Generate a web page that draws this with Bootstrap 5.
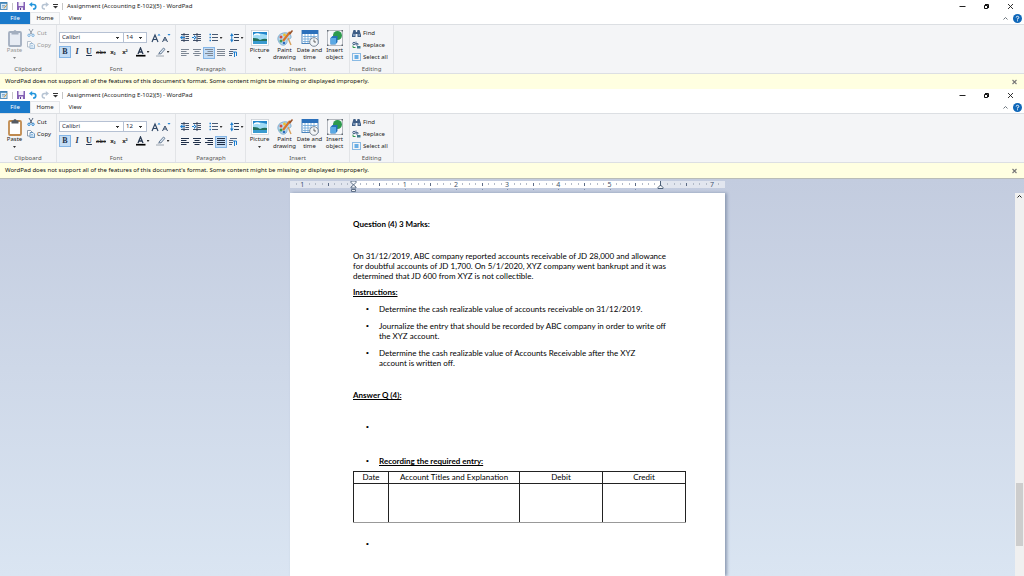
<!DOCTYPE html>
<html lang="en">
<head>
<meta charset="utf-8">
<meta name="viewport" content="width=device-width, initial-scale=1">
<title>Assignment (Accounting E-102)(5) - WordPad</title>
<link href="https://cdn.jsdelivr.net/npm/bootstrap@5.3.0/dist/css/bootstrap.min.css" rel="stylesheet">
<script src="https://cdn.jsdelivr.net/npm/bootstrap@5.3.0/dist/js/bootstrap.bundle.min.js"></script>
<style>
  body { font: 6px/7px "Noto Sans", "Open Sans", sans-serif; color: #1c1c1c; background: #fff; }
  button, select, a { font: inherit; color: inherit; text-decoration: none; }
  button { background: none; border: 0; padding: 0; }
  svg { display: block; flex: none; }
  .i8 { width: 8px; height: 8px; } .i10 { width: 10px; height: 10px; } .i18 { width: 18px; height: 18px; }
  .titlebar { height: 12px; padding-right: 2px; }
  .titlebar .vr { height: 7px; min-height: 0; align-self: center; }
  .winctl { width: 24px; }
  .tabs { height: 12px; padding-right: 2px; }
  .tabs a { display: block; height: 12px; line-height: 12px; width: 30px; text-align: center; }
  .tabs .file-tab { background: #1979ca; color: #fff; }
  .tabs .home-tab { background: #f9fafb; border: solid #e4e6e9; border-width: 1px 1px 0; line-height: 11px; }
  .ribbon { height: 50px; background: #f4f5f7; border: solid #dcdfe3; border-width: 1px 0; }
  .group { border-right: 1px solid #e2e4e7; padding: 4px 2px 0; color: #222; }
  .group-name { color: #555; text-align: center; margin: auto -2px 0; line-height: 8px; }
  .g-clip { width: 57px; } .g-font { width: 119px; } .g-para { width: 70px; padding-left: 3px; } .g-ins { width: 104px; padding: 4px 1px 0; } .g-edit { width: 44px; }
  .tool-row { margin: 3px 0; }
  .tool { height: 12px; width: 12px; flex: none; display: flex; align-items: center; justify-content: center; border: 1px solid transparent; color: inherit; }
  .tool.wide { width: 17px; gap: 1px; }
  .g-font .tool.wide { margin-left: 3px; }
  .tool.active { background: #c3dcf5; border-color: #84b5e6; }
  .letter { font: bold 8px/8px "Liberation Serif", serif; color: #22334d; }
  .picker { appearance: none; flex: none; height: 11px; line-height: 9px; padding: 0 2px; border: 1px solid #b6c1d3; border-radius: 0; color: #1e2a3a;
    background: linear-gradient(#333, #333) right 4px top 4px / 3px 1px no-repeat, linear-gradient(#333, #333) right 5px top 5px / 1px 1px no-repeat #fff; }
  .p-face { width: 65px; } .p-size { width: 24px; margin-left: -1px; }
  .caret { width: 3px; height: 2px; background: #333; clip-path: polygon(0 0, 100% 0, 50% 100%); }
  .big { width: 25px; text-align: center; display: flex; flex-direction: column; align-items: center; white-space: nowrap; }
  .big .caret { margin-top: 3px; }
  .with-icon { display: flex; align-items: center; gap: 2px; white-space: nowrap; }
  .off { color: #969696; } .off svg, .off .caret { opacity: .6; }
  .notice { height: 15px; background: #ffffe1; color: #111; padding: 0 6px 0 5px; }
  .notice button { color: #777; }
  .desk { background: linear-gradient(#c3ccdf, #dae5f2); border-top: 1px solid #b9bcb8; }
  .ruler-row { height: 14px; padding: 2px 9px 0 0; }
  .ruler text { font-size: 7px; fill: #44546e; text-anchor: middle; }
  .sheet { width: 435px; font: 8px/10px Lato, "Liberation Sans", sans-serif; color: #000; padding: 26px 39px 26px 63px; background: #fff; box-shadow: 2px 0 3px #8d9bb3; }
  .sheet p { margin: 0; padding-right: 15px; }
  .sheet ul { margin: 0; padding: 0 15px 0 26px; list-style: none; }
  .sheet li { min-height: 10px; margin-bottom: 7px; }
  .sheet li::before { content: "•"; float: left; margin-left: -13px; font-family: "Liberation Sans", sans-serif; }
  .sheet u { text-underline-offset: 1px; text-decoration-thickness: 1px; font-weight: 700; }
  .sheet .question { margin-bottom: 22px; }
  .sheet .lead-in { margin: 6px 0 7px; }
  .sheet .answer { margin: 22px 0; }
  .sheet .answers li { margin-bottom: 24px; }
  .sheet .answers li:last-child { margin-bottom: 5px; }
  .sheet .trailing li { margin: 16px 0 0; }
  .entry { width: 333px; border-collapse: collapse; table-layout: fixed; }
  .entry th, .entry td { border: 1px solid #222; text-align: center; font-weight: 400; padding: 0; line-height: 11px; }
  .entry td { height: 39px; border-bottom-color: #999; }
  .c-date { width: 35px; } .c-title { width: 131px; }
  .track { width: 9px; background: #f0f0f0; }
  .track .above { flex: 283 1 0; } .track .below { flex: 30 1 0; }
  .thumb { background: #cdcdcd; flex: 63 1 0; margin: 0 1px; }
</style>
</head>
<body class="d-flex flex-column min-vh-100">

<svg width="0" height="0" class="position-absolute" aria-hidden="true">
  <symbol id="app" viewBox="0 0 8 8"><rect x=".5" y=".5" width="6.500" height="7" fill="#dcecf8" stroke="#5d93bd"/><path d="M.5 1h6.500" stroke="#347bb0" stroke-width="1.500"/><path d="M2 3.500h3M2 5h3" stroke="#5d93bd" stroke-width=".7"/><path d="M4 6.500l3-4" stroke="#d29c45"/></symbol>
  <symbol id="save" viewBox="0 0 8 8"><path d="M0 0h8v8H0z" fill="#8461b5"/><path d="M1.500 0h5v4h-5z" fill="#f4effa"/><path d="M2 5.500h4V8H2z" fill="#efe8f7"/><path d="M3 6h1v2H3z" fill="#5c3b8c"/></symbol>
  <symbol id="undo" viewBox="0 0 8 8"><path d="M2 2.500h2.500a2 2 0 0 1 0 4.500H4" fill="none" stroke="currentColor" stroke-width="1.700"/><path d="M0 2.500L3.200 0v5z" fill="currentColor"/></symbol>
  <symbol id="redo" viewBox="0 0 8 8"><path d="M6 2.500H3.500a2 2 0 0 0 0 4.500H4" fill="none" stroke="currentColor" stroke-width="1.500"/><path d="M8 2.500L4.800 0v5z" fill="currentColor"/></symbol>
  <symbol id="menu" viewBox="0 0 5 6"><path d="M0 1.500h5" stroke="#333"/><path d="M0 3h5L2.500 5.500z" fill="#333"/></symbol>
  <symbol id="min" viewBox="0 0 7 7"><path d="M.5 3.500h6" stroke="#222"/></symbol>
  <symbol id="max" viewBox="0 0 7 7"><path d="M1.500 2.500h3v3h-3zM2 1.500h3.500V5" fill="none" stroke="#111"/></symbol>
  <symbol id="x" viewBox="0 0 7 7"><path d="M1 1l5 5M6 1L1 6" stroke="currentColor" stroke-width=".9"/></symbol>
  <symbol id="xs" viewBox="0 0 7 7"><path d="M1.500 2l4 4M5.500 2l-4 4" stroke="currentColor" stroke-width="1.100"/></symbol>
  <symbol id="up" viewBox="0 0 7 7"><path d="M1.500 4.500l2-2 2 2" fill="none" stroke="currentColor"/></symbol>
  <symbol id="paste" viewBox="0 0 14 18"><rect x="1" y="3" width="12" height="14" rx="1" fill="#fff" stroke="#c08a4e" stroke-width="1.800"/><path d="M3.500 2.500h2a1.500 1.500 0 0 1 3 0h2v3h-7z" fill="#555b63"/></symbol>
  <symbol id="pasteoff" viewBox="0 0 14 18"><rect x="1" y="3" width="12" height="14" rx="1" fill="#dfe7f3" stroke="#6d7f9b" stroke-width="1.800"/><path d="M3.500 2.500h2a1.500 1.500 0 0 1 3 0h2v3h-7z" fill="#6d7f9b"/></symbol>
  <symbol id="cut" viewBox="0 0 8 8"><path d="M2 0l3.200 5.500M6 0L2.800 5.500" stroke="#526277"/><circle cx="2" cy="6.300" r="1.200" fill="none" stroke="#2c86cf"/><circle cx="6" cy="6.300" r="1.200" fill="none" stroke="#2c86cf"/></symbol>
  <symbol id="copy" viewBox="0 0 8 8"><path d="M.5.5h3l1.500 1.500v4H.5z" fill="#fff" stroke="#73859b" stroke-width=".8"/><path d="M3 2.500h3L7.500 4v3.500H3z" fill="#e8f2fb" stroke="#4e83b5" stroke-width=".8"/><path d="M4 4.500h2M4 6h2.500" stroke="#4e93d0" stroke-width=".6"/></symbol>
  <symbol id="grow" viewBox="0 0 10 10"><path d="M1 9L4 2l3 7M2 6.500h4" fill="none" stroke="#2f4766" stroke-width="1.200"/><path d="M6.500 2.500L8 .7l1.500 1.800z" fill="#1e7fd0"/></symbol>
  <symbol id="shrink" viewBox="0 0 10 10"><path d="M1.500 9L4 4l2.500 5M2.500 7h3" fill="none" stroke="#2f4766"/><path d="M6.500 1L8 2.800 9.500 1z" fill="#1e7fd0"/></symbol>
  <symbol id="fcolor" viewBox="0 0 10 10"><path d="M2 7L4.500 1 7 7M3 5h3" fill="none" stroke="#2a3a52" stroke-width="1.300"/><path d="M0 8.700h9.500" stroke="#000" stroke-width="1.700"/></symbol>
  <symbol id="pen" viewBox="0 0 10 10"><path d="M3 6L7.500 1l1.500 1.300L4.800 7z" fill="#dfe9f3" stroke="#47617f" stroke-width=".8"/><path d="M3 6l-1.500 1.500 3-.3" fill="#6a7e96"/><path d="M0 9h8" stroke="#b2b8c2" stroke-width="1.300"/></symbol>
  <symbol id="outdent" viewBox="0 0 10 10"><path d="M1 1.500h8M5.500 3.500H9M5.500 5.500H9M1 7.500h8M4 0v9" stroke="#2c3d57" stroke-width=".9"/><path d="M0 4.500L2.500 2v5zM2 4h3v1H2z" fill="#1e7fd0"/></symbol>
  <symbol id="indent" viewBox="0 0 10 10"><path d="M1 1.500h8M5.500 3.500H9M5.500 5.500H9M1 7.500h8M5 0v9" stroke="#2c3d57" stroke-width=".9"/><path d="M4.500 4.500L2 2v5zM0 4h3v1H0z" fill="#1e7fd0"/></symbol>
  <symbol id="list" viewBox="0 0 10 10"><path d="M3 1.500h6M3 4.500h6M3 7.500h6" stroke="#4a5a72"/><path d="M.5 1.500H2M.5 4.500H2M.5 7.500H2" stroke="#1e7fd0" stroke-width="1.500"/></symbol>
  <symbol id="spacing" viewBox="0 0 10 10"><path d="M4 1.500h5M4 4.500h5M4 7.500h5" stroke="#34455e"/><path d="M1.800 0L0 3h3.600zM1.800 9.500L0 6.500h3.600zM1.300 3h1v4h-1z" fill="#1e7fd0"/></symbol>
  <symbol id="al" viewBox="0 0 10 10"><path d="M1 1.500h8M1 3.500h5.500M1 5.500h8M1 7.500h5.500" stroke="currentColor"/></symbol>
  <symbol id="ac" viewBox="0 0 10 10"><path d="M1 1.500h8M2.500 3.500h5M1 5.500h8M2.500 7.500h5" stroke="currentColor"/></symbol>
  <symbol id="ar" viewBox="0 0 10 10"><path d="M1 1.500h8M3.500 3.500H9M1 5.500h8M3.500 7.500H9" stroke="currentColor"/></symbol>
  <symbol id="aj" viewBox="0 0 10 10"><path d="M1 1.500h8M1 3.500h8M1 5.500h8M1 7.500h8" stroke="currentColor"/></symbol>
  <symbol id="para" viewBox="0 0 10 10"><path d="M2 1.500h7M1 3.500h4M1 5.500h4M1 7.500h3" stroke="#53657f"/><path d="M5 4h3.500v4M6.500 4v5" stroke="#1e7fd0" fill="none"/></symbol>
  <symbol id="picture" viewBox="0 0 18 18"><rect x=".5" y="1.500" width="17" height="15" fill="#fff" stroke="#c3c9d0" stroke-width=".7"/><path d="M2 3h14v12H2z" fill="#2387cc"/><path d="M2 6q6-3 14 0v5H2z" fill="#9fdbf5"/><path d="M3 6q3-2 6 0" stroke="#fff" stroke-width="1.500" fill="none"/><path d="M2 9q5 0 7 2 4-2 7-1v2H2z" fill="#23705c"/><path d="M2 12h14v3H2z" fill="#3a9bd0"/></symbol>
  <symbol id="paint" viewBox="0 0 18 18"><path d="M2 11C1 6 6 3 11 4c5 1 5 6 2 6-3 0-1 3-3 5-3 3-7 0-8-4z" fill="#b9d9ee" stroke="#699fc7" stroke-width=".8"/><circle cx="5" cy="8" r="1.500" fill="#d54c3b"/><circle cx="8.500" cy="6" r="1.400" fill="#eec02e"/><circle cx="5" cy="12" r="1.500" fill="#3b9b51"/><circle cx="8" cy="14" r="1.300" fill="#2b6bc0"/><path d="M7 12l7-9" stroke="#d87528" stroke-width="2.200"/><path d="M13 4l3-3 1 1-3 4z" fill="#9b5328"/><path d="M12 9l3 7" stroke="#d7a05c" stroke-width="1.400"/></symbol>
  <symbol id="date" viewBox="0 0 18 18"><rect x="1" y="1.500" width="16" height="13" fill="#fff" stroke="#4a83bd"/><path d="M1 1h16v4H1z" fill="#2b70bb"/><path d="M2 7.500h14M2 10h14M2 12.500h14M4 5v9M7 5v9M10 5v9M13 5v9" stroke="#6ba4d8" stroke-width=".8"/><circle cx="13" cy="13" r="4.300" fill="#f2f5f7" stroke="#7f8b98"/><path d="M13 10.500V13h2" fill="none" stroke="#444" stroke-width=".8"/></symbol>
  <symbol id="object" viewBox="0 0 18 18"><rect x="1.500" y="1.500" width="15" height="15" fill="#f7f8fa" stroke="#a3a9b0" stroke-width=".8"/><circle cx="11.500" cy="6.500" r="4.500" fill="#2d9a4d"/><path d="M4.500 9l2-2h5v6l-2 2.500h-5z" fill="#2472b8"/><path d="M4.500 9h5.500v6H4.500z" fill="#5ba9e5"/><path d="M1 1h1.500v1.500H1zM15.500 1H17v1.500h-1.500zM1 15.500h1.500V17H1zM15.500 15.500H17V17h-1.500z" fill="#626a73"/></symbol>
  <symbol id="find" viewBox="0 0 9 8"><path d="M1.500 1h2l.5 2h1l.5-2h2L9 6v2H5.500V5h-2v3H0V6z" fill="#3e5d85"/><path d="M1 6h2M6.500 6h1.500" stroke="#b5d3ef"/></symbol>
  <symbol id="replace" viewBox="0 0 9 8"><circle cx="2" cy="2.500" r="1.200" fill="none" stroke="#3e5d85"/><path d="M4 .5v3.500M4 2.500h2v1.500H4" stroke="#3e5d85" fill="none" stroke-width=".8"/><path d="M1 4.500v2h2.500" stroke="#2f9b4c" fill="none"/><path d="M5 5h3.500v2.500H5z" fill="#3f7c8c"/></symbol>
  <symbol id="selall" viewBox="0 0 9 8"><rect x=".5" y=".5" width="8" height="7" fill="none" stroke="#1e7fd0" stroke-dasharray="1 1"/><path d="M2.500 2h4v4h-4z" fill="#69aee5"/></symbol>
  <symbol id="help" viewBox="0 0 9 9"><circle cx="4.500" cy="4.500" r="4.500" fill="#0f67b9"/><path d="M3.200 3.500a1.300 1.200 0 1 1 1.300 1.200v.8M4.500 6.300v1" fill="none" stroke="#fff" stroke-width=".9"/></symbol>
</svg>

<div id="windows"></div>

<main class="desk d-flex flex-column flex-grow-1">
  <div class="ruler-row d-flex justify-content-center">
    <svg class="ruler" id="ruler" width="435" height="12" viewBox="0 0 435 12" role="img" aria-label="Ruler"></svg>
  </div>
  <div class="d-flex flex-grow-1">
    <div class="flex-grow-1 d-flex justify-content-center">
      <article class="sheet">
        <p class="question"><b>Question (4) 3 Marks:</b></p>
        <p>On 31/12/2019, ABC company reported accounts receivable of JD 28,000 and allowance for doubtful accounts of JD 1,700. On 5/1/2020, XYZ company went bankrupt and it was determined that JD 600 from XYZ is not collectible.</p>
        <p class="lead-in"><u>Instructions:</u></p>
        <ul>
          <li>Determine the cash realizable value of accounts receivable on 31/12/2019.</li>
          <li>Journalize the entry that should be recorded by ABC company in order to write off<br>the XYZ account.</li>
          <li>Determine the cash realizable value of Accounts Receivable after the XYZ<br>account is written off.</li>
        </ul>
        <p class="answer"><u>Answer Q (4):</u></p>
        <ul class="answers">
          <li></li>
          <li><u>Recording the required entry:</u></li>
        </ul>
        <table class="entry">
          <thead><tr><th class="c-date">Date</th><th class="c-title">Account Titles and Explanation</th><th>Debit</th><th>Credit</th></tr></thead>
          <tbody><tr><td></td><td></td><td></td><td></td></tr></tbody>
        </table>
        <ul class="trailing"><li></li></ul>
      </article>
    </div>
    <div class="track d-flex flex-column">
      <svg class="mx-auto" width="7" height="7"><use href="#up"/></svg>
      <div class="above"></div><div class="thumb"></div><div class="below"></div>
    </div>
  </div>
</main>

<script>
  const icon = (name, cls = 'i10') => `<svg class="${cls}" aria-hidden="true"><use href="#${name}"/></svg>`;
  const sized = (name, w, h, cls = '') => `<svg class="${cls}" width="${w}" height="${h}" aria-hidden="true"><use href="#${name}"/></svg>`;
  const caret = '<i class="caret"></i>';
  const tool = (label, body, cls = '') => `<button class="tool ${cls}" aria-label="${label}">${body}</button>`;

  const windowBar = w => `
  <header>
    <div class="titlebar d-flex align-items-center">
      ${icon('app', 'i8')}<span class="vr ms-1 me-1"></span>
      <button aria-label="Save">${icon('save', 'i8')}</button>
      <button class="ms-1" aria-label="Undo" style="color:#2496dc">${icon('undo', 'i8')}</button>
      <button class="ms-1" aria-label="Redo" style="color:#b7c4d3">${icon('redo', 'i8')}</button>
      <button class="ms-1" aria-label="Customize toolbar">${sized('menu', 5, 6)}</button>
      <span class="vr mx-1"></span><span>Assignment (Accounting E-102)(5) - WordPad</span>
      <div class="d-flex ms-auto">
        <button class="winctl" aria-label="Minimize">${sized('min', 7, 7, 'mx-auto')}</button>
        <button class="winctl" aria-label="Restore">${sized('max', 7, 7, 'mx-auto')}</button>
        <button class="winctl" aria-label="Close">${sized('x', 7, 7, 'mx-auto')}</button>
      </div>
    </div>
    <nav class="tabs d-flex align-items-center" aria-label="Ribbon tabs">
      <a class="file-tab" href="#">File</a><a class="home-tab" href="#">Home</a><a href="#">View</a>
      <button class="ms-auto text-secondary" aria-label="Collapse ribbon">${sized('up', 7, 7)}</button>
      <button class="ms-1" aria-label="Help">${sized('help', 9, 9)}</button>
    </nav>
    <div class="ribbon d-flex">
      <section class="group g-clip d-flex flex-column">
        <div class="d-flex ${w.clip ? '' : 'off'}">
          <button class="big">${sized(w.clip ? 'paste' : 'pasteoff', 14, 18)}Paste${caret}</button>
          <div class="d-flex flex-column gap-1">
            <button class="with-icon">${icon('cut', 'i8')}Cut</button>
            <button class="with-icon">${icon('copy', 'i8')}Copy</button>
          </div>
        </div>
        <div class="group-name">Clipboard</div>
      </section>
      <section class="group g-font d-flex flex-column">
        <div class="tool-row d-flex align-items-center">
          <select class="picker p-face" aria-label="Font family"><option>Calibri</option></select>
          <select class="picker p-size" aria-label="Font size"><option>${w.size}</option></select>
          <button class="ms-1" aria-label="Grow font">${icon('grow')}</button>
          <button aria-label="Shrink font">${icon('shrink')}</button>
        </div>
        <div class="d-flex">
          ${tool('Bold', 'B', 'letter active')}${tool('Italic', '<i>I</i>', 'letter')}${tool('Underline', '<u>U</u>', 'letter')}${tool('Strikethrough', '<s>abc</s>')}${tool('Subscript', 'x₂', 'fw-bold')}${tool('Superscript', 'x²', 'fw-bold')}
          ${tool('Text color', icon('fcolor') + caret, 'wide')}${tool('Highlight', icon('pen') + caret, 'wide')}
        </div>
        <div class="group-name">Font</div>
      </section>
      <section class="group g-para d-flex flex-column">
        <div class="tool-row d-flex">
          ${tool('Decrease indent', icon('outdent'))}${tool('Increase indent', icon('indent'))}${tool('List', icon('list') + caret, 'wide ms-1')}${tool('Line spacing', icon('spacing') + caret, 'wide ms-1')}
        </div>
        <div class="d-flex" style="color:${w.alignColor}">
          ${[['al', 'Align left'], ['ac', 'Center'], ['ar', 'Align right'], ['aj', 'Justify']].map(([id, label]) => tool(label, icon(id), id === w.align ? 'active' : '')).join('')}${tool('Paragraph', icon('para'))}
        </div>
        <div class="group-name">Paragraph</div>
      </section>
      <section class="group g-ins d-flex flex-column">
        <div class="d-flex">
          <button class="big">${icon('picture', 'i18')}Picture${caret}</button>
          <button class="big">${icon('paint', 'i18')}Paint<br>drawing</button>
          <button class="big">${icon('date', 'i18')}Date and<br>time</button>
          <button class="big">${icon('object', 'i18')}Insert<br>object</button>
        </div>
        <div class="group-name">Insert</div>
      </section>
      <section class="group g-edit d-flex flex-column">
        <div class="d-flex flex-column gap-1">
          <button class="with-icon">${sized('find', 9, 8)}Find</button>
          <button class="with-icon">${sized('replace', 9, 8)}Replace</button>
          <button class="with-icon">${sized('selall', 9, 8)}Select all</button>
        </div>
        <div class="group-name">Editing</div>
      </section>
    </div>
    <div class="notice d-flex align-items-center justify-content-between">
      <span>WordPad does not support all of the features of this document's format. Some content might be missing or displayed improperly.</span>
      <button aria-label="Dismiss">${sized('xs', 7, 7)}</button>
    </div>
  </header>`;

  document.getElementById('windows').innerHTML = [
    { size: 14, clip: false, align: 'ar', alignColor: '#7d8794' },
    { size: 12, clip: true, align: 'aj', alignColor: '#1f2f49' },
  ].map(windowBar).join('');

  // Ruler: zero sits at the left margin, one inch is 51.2 units, with eighth-inch ticks.
  const zero = 63.5, inch = 51.2;
  let marks = '<path d="M0 0h435v7H0z" fill="#e2e6ef"/><path d="M63 0h308v7H63z" fill="#fff"/>';
  for (let n = -9; n <= 57; n++) {
    const x = zero + n * inch / 8;
    if (n % 8 === 0) {
      if (n && n !== 48) marks += `<text x="${x}" y="6">${Math.abs(n / 8)}</text>`;
    } else {
      const half = n % 4 === 0;
      marks += `<path d="M${Math.round(x) + .5} 2v${half ? 3 : 2}" stroke="${half ? '#5d6c86' : '#b3bbc8'}"/>`;
    }
    if (n > 0 && n < 48 && n % 4 === 0) marks += `<path d="M${Math.round(x)} 8.500h1" stroke="#8593ab"/>`;
  }
  marks += '<path d="M61 0h5v1.500L63.500 4 61 1.500zM61 7V6l2.500-2L66 6v1zM61.500 8.500h4v2h-4z" fill="#f4f6f9" stroke="#4d6078" stroke-width=".9"/>';
  marks += '<path d="M370.500 0v5M368 7.500V6.500l2.500-2.500L373 6.500v1z" fill="#f4f6f9" stroke="#4d6078"/>';
  document.getElementById('ruler').innerHTML = marks;
</script>
</body>
</html>
